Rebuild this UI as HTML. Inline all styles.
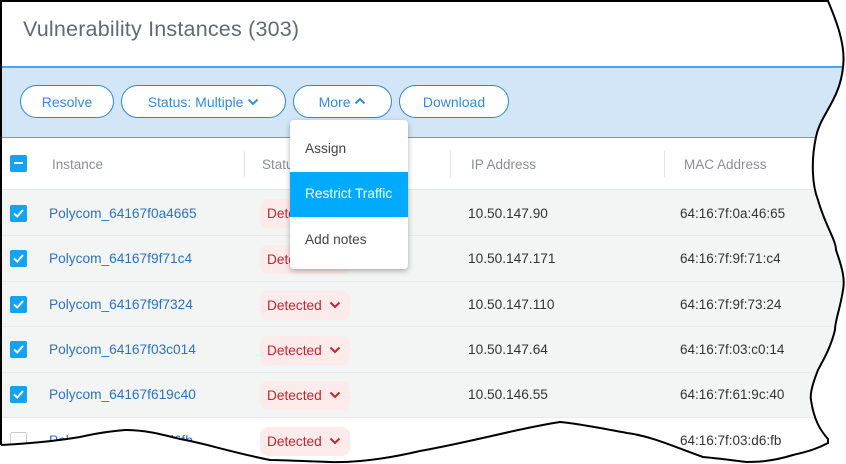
<!DOCTYPE html>
<html><head><style>
*{margin:0;padding:0;box-sizing:border-box}
body{width:846px;height:464px;overflow:hidden;background:#fff;font-family:"Liberation Sans",sans-serif;position:relative}
.a{position:absolute}
.title{left:23px;top:17px;font-size:21.5px;color:#5d6b78;letter-spacing:0.2px}
.bar{left:0;top:66px;width:846px;height:72px;background:#d2e6f8;border-top:2px solid #47a6f5;border-bottom:1px solid #47a6f5}
.btn{top:85px;height:33px;border:1px solid #2c86d8;border-radius:17px;background:#fff;color:#2f8be6;font-size:14px;text-align:center;line-height:32px}
.hdr{top:138px;height:52px;width:846px;left:0;background:#fff;border-bottom:1px solid #e6e8e8}
.ht{top:157px;font-size:13.5px;color:#8a8f96}
.div{top:151px;width:1px;height:26px;background:#e3e5e6}
.row{left:0;width:846px;background:#f3f4f4;border-bottom:1px solid #e9ebeb}
.cb{left:10px;width:17px;height:17px;background:#12a3f5;border-radius:2px}
.lnk{left:49px;font-size:13.7px;color:#2b72c6}
.pill{left:260px;width:90px;height:29px;border-radius:8px;background:#fdeaea;color:#c4262e;font-size:13.7px;line-height:29px;padding-left:7px}
.ip{left:468px;font-size:13.7px;color:#333}
.mac{left:680px;font-size:13.5px;color:#333}
.menu{left:290px;top:120px;width:118px;height:149px;background:#fff;border-radius:4px;box-shadow:0 2px 6px rgba(0,0,0,.3)}
.mi{left:15px;font-size:13.7px;color:#444}
</style></head><body>
<div class="a title">Vulnerability Instances (303)</div>
<div class="a bar"></div>
<div class="a btn" style="left:20px;width:94px">Resolve</div>
<div class="a btn" style="left:121px;width:165px">Status: Multiple <svg width="12" height="8" viewBox="0 0 12 8" style="vertical-align:1px"><path d="M1.5 1.5L6 6L10.5 1.5" fill="none" stroke="#2f8be6" stroke-width="2"/></svg></div>
<div class="a btn" style="left:293px;width:99px">More <svg width="12" height="8" viewBox="0 0 12 8" style="vertical-align:2px"><path d="M1.5 6.5L6 2L10.5 6.5" fill="none" stroke="#2f8be6" stroke-width="2"/></svg></div>
<div class="a btn" style="left:399px;width:110px">Download</div>

<div class="a hdr"></div>
<div class="a cb" style="top:155px"><div class="a" style="left:4px;top:7px;width:9px;height:2px;background:#fff"></div></div>
<div class="a ht" style="left:52px">Instance</div>
<div class="a div" style="left:244px"></div>
<div class="a ht" style="left:262px">Status</div>
<div class="a div" style="left:450px"></div>
<div class="a ht" style="left:471px">IP Address</div>
<div class="a div" style="left:664px"></div>
<div class="a ht" style="left:684px">MAC Address</div>

<div class="a row" style="top:190px;height:46px"></div>
<div class="a row" style="top:236px;height:46px"></div>
<div class="a row" style="top:282px;height:45px"></div>
<div class="a row" style="top:327px;height:46px"></div>
<div class="a row" style="top:373px;height:45px"></div>

<div class="a cb" style="top:205px"><svg class="a" width="17" height="17"><path d="M4 8.5L7.3 11.5L13 5" fill="none" stroke="#fff" stroke-width="2"/></svg></div>
<div class="a lnk" style="top:206px">Polycom_64167f0a4665</div>
<div class="a pill" style="top:199px">Detected</div>
<div class="a ip" style="top:206px">10.50.147.90</div>
<div class="a mac" style="top:206px">64:16:7f:0a:46:65</div>

<div class="a cb" style="top:250px"><svg class="a" width="17" height="17"><path d="M4 8.5L7.3 11.5L13 5" fill="none" stroke="#fff" stroke-width="2"/></svg></div>
<div class="a lnk" style="top:251px">Polycom_64167f9f71c4</div>
<div class="a pill" style="top:245px">Detected</div>
<div class="a ip" style="top:251px">10.50.147.171</div>
<div class="a mac" style="top:251px">64:16:7f:9f:71:c4</div>

<div class="a cb" style="top:296px"><svg class="a" width="17" height="17"><path d="M4 8.5L7.3 11.5L13 5" fill="none" stroke="#fff" stroke-width="2"/></svg></div>
<div class="a lnk" style="top:297px">Polycom_64167f9f7324</div>
<div class="a pill" style="top:291px">Detected <svg width="12" height="8" viewBox="0 0 12 8" style="vertical-align:1px;margin-left:3px"><path d="M1.5 1.5L6 6L10.5 1.5" fill="none" stroke="#c4262e" stroke-width="2"/></svg></div>
<div class="a ip" style="top:297px">10.50.147.110</div>
<div class="a mac" style="top:297px">64:16:7f:9f:73:24</div>

<div class="a cb" style="top:341px"><svg class="a" width="17" height="17"><path d="M4 8.5L7.3 11.5L13 5" fill="none" stroke="#fff" stroke-width="2"/></svg></div>
<div class="a lnk" style="top:342px">Polycom_64167f03c014</div>
<div class="a pill" style="top:336px">Detected <svg width="12" height="8" viewBox="0 0 12 8" style="vertical-align:1px;margin-left:3px"><path d="M1.5 1.5L6 6L10.5 1.5" fill="none" stroke="#c4262e" stroke-width="2"/></svg></div>
<div class="a ip" style="top:342px">10.50.147.64</div>
<div class="a mac" style="top:342px">64:16:7f:03:c0:14</div>

<div class="a cb" style="top:386px"><svg class="a" width="17" height="17"><path d="M4 8.5L7.3 11.5L13 5" fill="none" stroke="#fff" stroke-width="2"/></svg></div>
<div class="a lnk" style="top:387px">Polycom_64167f619c40</div>
<div class="a pill" style="top:381px">Detected <svg width="12" height="8" viewBox="0 0 12 8" style="vertical-align:1px;margin-left:3px"><path d="M1.5 1.5L6 6L10.5 1.5" fill="none" stroke="#c4262e" stroke-width="2"/></svg></div>
<div class="a ip" style="top:387px">10.50.146.55</div>
<div class="a mac" style="top:387px">64:16:7f:61:9c:40</div>

<div class="a" style="left:10px;top:432px;width:17px;height:17px;border:1px solid #ccc;border-radius:2px"></div>
<div class="a lnk" style="top:433px">Polycom_64167f03d6fb</div>
<div class="a pill" style="top:427px">Detected <svg width="12" height="8" viewBox="0 0 12 8" style="vertical-align:1px;margin-left:3px"><path d="M1.5 1.5L6 6L10.5 1.5" fill="none" stroke="#c4262e" stroke-width="2"/></svg></div>
<div class="a mac" style="top:433px">64:16:7f:03:d6:fb</div>

<div class="a menu">
<div class="a mi" style="top:21px">Assign</div>
<div class="a" style="left:0;top:52px;width:118px;height:45px;background:#00aaff"></div>
<div class="a mi" style="top:66px;color:#fff">Restrict Traffic</div>
<div class="a mi" style="top:112px">Add notes</div>
</div>

<svg class="a" style="left:0;top:0" width="846" height="464" viewBox="0 0 846 464">
<path d="M0 0 L828 0 C836 20 846 45 843 67 C840 100 820 115 816 137 C811 160 812 185 818 200 C825 225 836 240 836 250 C843 270 845 280 843 290 C840 310 835 320 835 330 C830 350 822 362 818 370 C812 385 810 395 811 400 C814 420 820 430 828 439 L828 443 C815 450 805 452 793 455 C770 462 755 462 747 462 C730 460 715 458 703 457 C670 445 650 436 627 433 C600 428 575 423 560 422 C520 428 480 440 420 451 C390 458 360 463 330 462 C300 461 280 460 270 460 C230 452 200 442 180 439 C160 434 145 430 125 430 C100 432 90 435 80 437 C50 442 20 444 0 445 L0 464 L846 464 L846 0 Z" fill="#fff"/>
<path d="M1 445 L1 1 L828 1 C836 20 846 45 843 67 C840 100 820 115 816 137 C811 160 812 185 818 200 C825 225 836 240 836 250 C843 270 845 280 843 290 C840 310 835 320 835 330 C830 350 822 362 818 370 C812 385 810 395 811 400 C814 420 820 430 828 439 L828 443 C815 450 805 452 793 455 C770 462 755 462 747 462 C730 460 715 458 703 457 C670 445 650 436 627 433 C600 428 575 423 560 422 C520 428 480 440 420 451 C390 458 360 463 330 462 C300 461 280 460 270 460 C230 452 200 442 180 439 C160 434 145 430 125 430 C100 432 90 435 80 437 C50 442 20 444 1 445" fill="none" stroke="#000" stroke-width="2"/>
</svg>
</body></html>
